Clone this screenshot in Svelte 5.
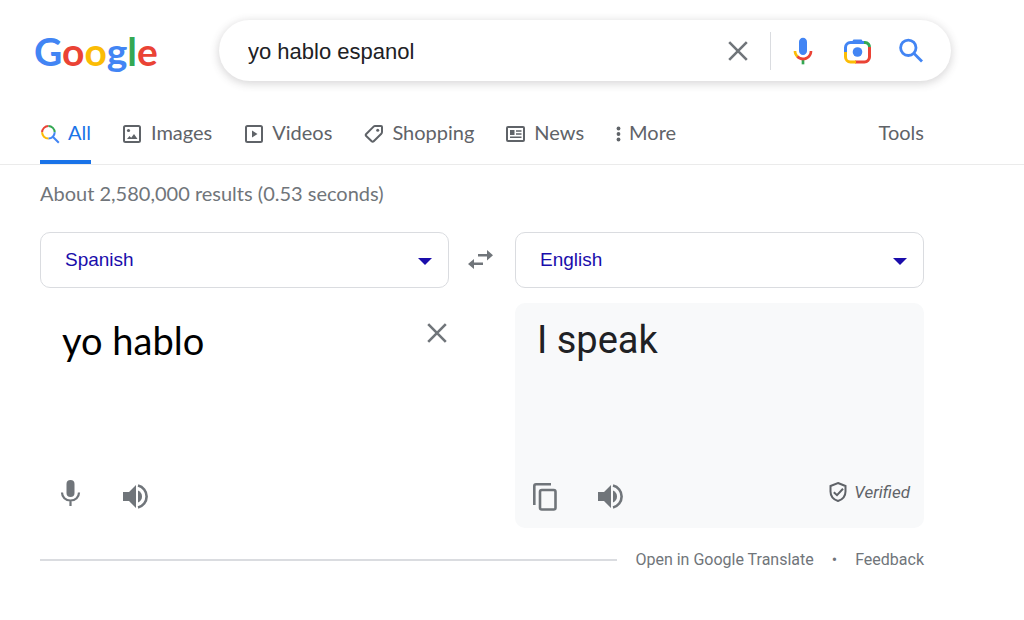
<script>
  let query = "yo hablo espanol";
  let source = "yo hablo";
  let from = "Spanish";
  let to = "English";
  const languages = ["Spanish", "English", "French", "German"];
  const logo = [
    ["G", "blue"],
    ["o", "red"],
    ["o", "yellow"],
    ["g", "blue"],
    ["l", "green"],
    ["e", "red"]
  ];

  function swap() {
    [from, to] = [to, from];
  }
</script>

{#snippet cross()}
  <svg width="32" height="32" viewBox="0 0 32 32" fill="none" stroke="#70757a" stroke-width="2.6">
    <path d="M7.2 7.2 24.8 24.8M24.8 7.2 7.2 24.8" />
  </svg>
{/snippet}

{#snippet speaker()}
  <svg width="32" height="32" viewBox="0 0 32 32" fill="#70757a">
    <path d="M3 12h6l7-7v23l-7-7H3z" />
    <path d="M18 10.5c2.6 1 4 3.4 4 6s-1.4 5-4 6z" />
    <path d="M18 5.6a11.2 11.2 0 0 1 0 21.8" fill="none" stroke="#70757a" stroke-width="2.6" />
  </svg>
{/snippet}

<header>
  <a class="logo" href="/" aria-label="Google">{#each logo as [letter, color]}<span class={color}>{letter}</span>{/each}</a>
  <form class="search" on:submit|preventDefault>
    <input type="text" aria-label="Search" bind:value={query} />
    <button type="button" aria-label="Clear" on:click={() => (query = "")}>{@render cross()}</button>
    <span class="divider"></span>
    <div class="tools">
      <button type="button" aria-label="Search by voice">
        <svg width="32" height="32" viewBox="0 0 24 24">
          <path fill="#4285f4" d="M12 15c1.66 0 3-1.31 3-2.97V5.01C15 3.35 13.66 2 12 2S9 3.34 9 5.01v7.02C9 13.69 10.34 15 12 15z" />
          <path fill="#34a853" d="M11 18.08h2V22h-2z" />
          <path fill="#fbbc05" d="M7.05 16.87C5.78 15.54 5 14.04 5 12h2c0 1.45.56 2.42 1.47 3.38v.32l-1.15 1.18z" />
          <path fill="#ea4335" d="M12 16.93a4.97 5.25 0 0 1-3.54-1.55l-1.41 1.49C8.31 18.21 10.07 19 12 19c3.87 0 6.99-2.92 6.99-7H17c0 2.92-2.24 4.93-5 4.93z" />
        </svg>
      </button>
      <button type="button" aria-label="Search by image">
        <svg width="32" height="32" viewBox="0 0 32 32" fill="none" stroke-width="3">
          <path stroke="#4285f4" d="M4.5 17v-4.500a5 5 0 0 1 5-5H24" />
          <path fill="#4285f4" d="M10 8l2.500-3.500h8L23 8z" />
          <path stroke="#34a853" d="M23 7.500h1a4.500 4.500 0 0 1 4.500 5" />
          <path stroke="#ea4335" d="M28.500 12V22a5 5 0 0 1-5 5H14" />
          <path stroke="#fbbc05" d="M4.500 17v5a5 5 0 0 0 5 5H15" />
          <circle cx="16.5" cy="17" r="4.8" fill="#4285f4" />
        </svg>
      </button>
      <button aria-label="Search">
        <svg width="32" height="32" viewBox="0 0 32 32" fill="none" stroke="#4285f4" stroke-width="2.8">
          <circle cx="13.3" cy="12.8" r="7.7" />
          <path d="M18.8 18.3 27 26.5" />
        </svg>
      </button>
    </div>
  </form>
</header>

<nav>
  <a class="active" href="#all">
    <svg width="20" height="20" viewBox="0 0 20 20" fill="none" stroke-width="2">
      <path stroke="#ea4335" d="M2.1 8.3A6.3 6.3 0 0 1 8.4 2" />
      <path stroke="#34a853" d="M8.4 2a6.3 6.3 0 0 1 6.3 6.3" />
      <path stroke="#4285f4" d="M14.7 8.3a6.3 6.3 0 0 1-6.3 6.3M12.8 12.8l6 6" />
      <path stroke="#fbbc05" d="M8.4 14.6a6.3 6.3 0 0 1-6.3-6.3" />
    </svg>
    All
  </a>
  <a href="#images">
    <svg width="20" height="20" viewBox="0 0 20 20" fill="none" stroke="#5f6368" stroke-width="2">
      <rect x="1" y="2" width="16" height="16" rx="1.5" />
      <circle cx="5.5" cy="6.5" r="1.6" fill="#5f6368" stroke="none" />
      <path fill="#5f6368" stroke="none" d="M4 15l2.500-3 1.700 1.800 2.800-3.800 3.500 5z" />
    </svg>
    Images
  </a>
  <a href="#videos">
    <svg width="20" height="20" viewBox="0 0 20 20" fill="none" stroke="#5f6368" stroke-width="2">
      <rect x="2" y="2" width="16" height="16" rx="1.5" />
      <path fill="#5f6368" stroke="none" d="M8 6.500v7l5.500-3.500z" />
    </svg>
    Videos
  </a>
  <a href="#shopping">
    <svg width="20" height="20" viewBox="0 0 20 20" fill="none" stroke="#5f6368" stroke-width="2" stroke-linejoin="round">
      <path d="M11 2h6q1 0 1 1v5q0 1-.7 1.700l-7.600 7.600q-1 1-2 0L2.200 12q-1-1 0-2L9.600 2.600Q10.200 2 11 2z" />
      <circle cx="13.7" cy="6.2" r="1.5" fill="#5f6368" stroke="none" />
    </svg>
    Shopping
  </a>
  <a href="#news">
    <svg width="20" height="20" viewBox="0 0 20 20" fill="none" stroke="#5f6368" stroke-width="2">
      <rect x="1" y="3" width="17" height="14" rx="1" />
      <path stroke-width="1.6" d="M10 7h5.500M10 10h5.500M4 13.300h11.500" />
      <path fill="#5f6368" stroke="none" d="M4 6h4.500v5H4z" />
    </svg>
    News
  </a>
  <button class="more">
    <svg width="5" height="20" viewBox="0 0 5 20" fill="#5f6368">
      <circle cx="2.5" cy="4.5" r="1.9" />
      <circle cx="2.5" cy="10" r="1.9" />
      <circle cx="2.5" cy="15.5" r="1.9" />
    </svg>
    More
  </button>
  <button class="right">Tools</button>
</nav>

<main>
  <p class="stats">About 2,580,000 results (0.53 seconds)</p>

  <div class="languages">
    <div class="select">
      <select aria-label="Source language" bind:value={from}>
        {#each languages as language}
          <option>{language}</option>
        {/each}
      </select>
    </div>
    <button class="swap" aria-label="Swap languages" on:click={swap}>
      <svg width="28" height="20" viewBox="0 0 28 20" fill="#70757a">
        <path d="M10 4h9V0l6 5.300-6 5.200V6.500h-9zM15 12.500H6V9l-6 5 6 5v-4h9z" />
      </svg>
    </button>
    <div class="select">
      <select aria-label="Target language" bind:value={to}>
        {#each languages as language}
          <option>{language}</option>
        {/each}
      </select>
    </div>
  </div>

  <div class="panels">
    <section class="panel">
      <div class="entry">
        <textarea aria-label="Source text" rows="1" bind:value={source}></textarea>
        <button aria-label="Clear text" on:click={() => (source = "")}>{@render cross()}</button>
      </div>
      <div class="actions">
        <button aria-label="Translate by voice">
          <svg width="32" height="32" viewBox="0 0 32 32" fill="#70757a">
            <rect x="12.5" y="0" width="8" height="17" rx="4" />
            <path d="M8 12.500c0 4.500 3.500 8 8.500 8s8.500-3.500 8.500-8M16.500 20.500V26" fill="none" stroke="#70757a" stroke-width="2.2" />
          </svg>
        </button>
        <button aria-label="Listen to source">{@render speaker()}</button>
      </div>
    </section>
    <section class="panel result">
      <p class="translation">I speak</p>
      <div class="actions">
        <button aria-label="Copy">
          <svg width="32" height="32" viewBox="0 0 32 32" fill="none" stroke="#70757a" stroke-width="2.6">
            <path d="M5.300 25V6q0-1.700 1.700-1.700h15" />
            <rect x="11" y="10" width="15.5" height="19.5" rx="1.8" />
          </svg>
        </button>
        <button aria-label="Listen to translation">{@render speaker()}</button>
        <span class="verified">
          <svg width="20" height="22" viewBox="0 0 20 22" fill="none" stroke="#5f6368" stroke-width="2">
            <path d="M10 2 17.500 5v5.500c0 4.400-3 8-7.500 9.500-4.500-1.500-7.500-5.100-7.500-9.500V5z" />
            <path d="M5.800 11.200 9 14.200l6-6.500" />
          </svg>
          Verified
        </span>
      </div>
    </section>
  </div>

  <footer>
    <hr />
    <a href="#translate">Open in Google Translate</a>
    <span>•</span>
    <a href="#feedback">Feedback</a>
  </footer>
</main>

<style>
  :global(body) {
    background: #fff;
    color: #202124;
    font-family: Roboto, sans-serif;
  }

  button {
    display: flex;
    padding: 0;
    border: none;
    background: none;
    color: inherit;
    font: inherit;
    cursor: pointer;
  }
  a {
    color: inherit;
    text-decoration: none;
  }
  svg {
    display: block;
    flex: none;
  }
  p {
    margin: 0;
  }

  header {
    display: flex;
    align-items: center;
    gap: 24px;
    padding: 20px 73px 0 34px;
  }
  .logo {
    width: 161px;
    font: bold 39px/60px Lato, sans-serif;
  }
  .blue {
    color: #4285f4;
  }
  .red {
    color: #ea4335;
  }
  .yellow {
    color: #fbbc05;
  }
  .green {
    color: #34a853;
  }

  .search {
    display: flex;
    flex: 1;
    align-items: center;
    gap: 16px;
    height: 61px;
    padding: 0 24px 0 29px;
    border-radius: 31px;
    box-shadow: 0 2px 8px 1px rgba(64, 60, 67, 0.2);
  }
  .search input {
    flex: 1;
    min-width: 0;
    padding: 2px 0 0;
    border: none;
    outline: none;
    background: none;
    color: #202124;
    font: 22px "Liberation Sans", Arial, sans-serif;
  }
  .divider {
    width: 1px;
    height: 38px;
    background: #dadce0;
  }
  .tools {
    display: flex;
    gap: 22px;
  }

  nav {
    display: flex;
    gap: 32px;
    height: 60px;
    margin-top: 23px;
    padding: 0 100px 0 40px;
    border-bottom: 1px solid #ebebeb;
    color: #5f6368;
    font: 20px Lato, sans-serif;
  }
  nav a,
  nav button {
    display: flex;
    align-items: center;
    gap: 8px;
    box-sizing: border-box;
    border-bottom: 4px solid transparent;
  }
  nav svg {
    margin-top: 3px;
  }
  nav .active {
    border-bottom-color: #1a73e8;
    color: #1a73e8;
  }
  .right {
    margin-left: auto;
  }

  main {
    padding: 0 100px 0 40px;
  }
  .stats {
    padding: 16px 0 27px;
    color: #70757a;
    font: 20px/24px Lato, sans-serif;
  }

  .languages,
  .panels {
    display: grid;
    grid-template-columns: minmax(0, 1fr) 66px minmax(0, 1fr);
  }
  .select {
    position: relative;
  }
  .select::after {
    content: "";
    position: absolute;
    top: 26px;
    right: 17px;
    border: 7px solid transparent;
    border-top-color: #1a0dab;
    border-bottom: none;
    pointer-events: none;
  }
  select {
    appearance: none;
    box-sizing: border-box;
    width: 100%;
    height: 56px;
    padding: 0 24px 2px;
    border: 1px solid #dadce0;
    border-radius: 10px;
    background: #fff;
    color: #1a0dab;
    font: 19px "Liberation Sans", Arial, sans-serif;
  }
  .swap {
    align-items: center;
    justify-content: center;
  }

  .panels {
    margin-top: 15px;
  }
  .panel {
    display: flex;
    flex-direction: column;
    justify-content: space-between;
    box-sizing: border-box;
    min-height: 225px;
    padding: 12px 14px 16px;
    border-radius: 10px;
  }
  .panel + .panel {
    grid-column: 3;
  }
  .result {
    background: #f8f9fa;
  }
  .entry {
    display: flex;
    align-items: flex-start;
    margin-right: -18px;
    padding-left: 8px;
  }
  .entry button {
    margin-top: 2px;
  }
  textarea {
    flex: 1;
    min-width: 0;
    height: 50px;
    padding: 0;
    border: none;
    outline: none;
    resize: none;
    overflow: hidden;
    color: #000;
    font: 38px/50px Lato, sans-serif;
  }
  .translation {
    padding-left: 8px;
    font-size: 38px;
    line-height: 50px;
  }
  .actions {
    display: flex;
    align-items: center;
    gap: 34px;
  }
  .verified {
    display: flex;
    align-items: center;
    align-self: flex-start;
    gap: 6px;
    margin-left: auto;
    color: #5f6368;
    font-size: 17px;
    line-height: 24px;
    font-style: italic;
  }

  footer {
    display: flex;
    align-items: center;
    gap: 18px;
    padding: 20px 0;
    color: #70757a;
    font-size: 16px;
    line-height: 24px;
  }
  hr {
    flex: 1;
    height: 2px;
    margin: 0;
    border: none;
    background: #dadce0;
  }
</style>
